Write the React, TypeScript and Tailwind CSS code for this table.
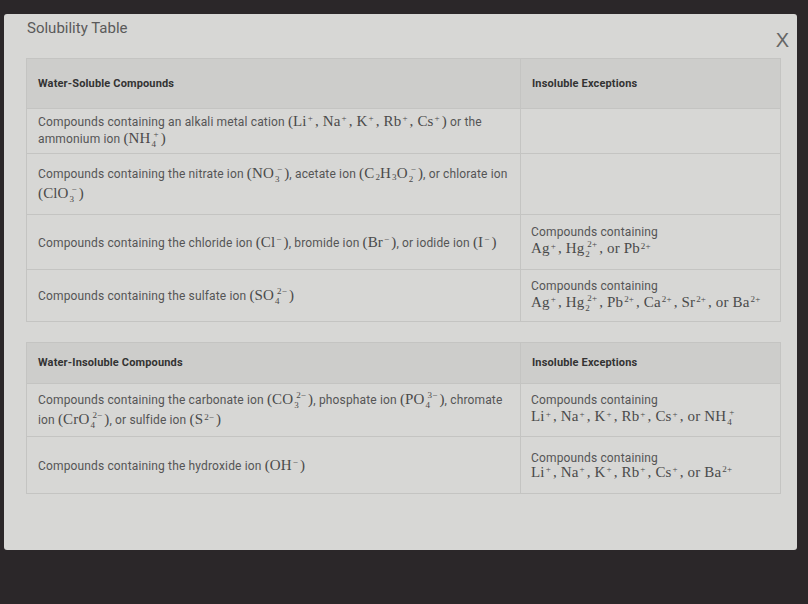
import React from "react";

// chem formula pieces
const F = ({ children }: { children: React.ReactNode }) => (
  <span className="font-['Liberation_Serif',serif] text-[15px] text-[#4a4a4a]">{children}</span>
);
const Sub = ({ children }: { children: React.ReactNode }) => <sub className="text-[9px] ml-[1px]">{children}</sub>;
const Sup = ({ children }: { children: React.ReactNode }) => <sup className="text-[9px] ml-[1px] mr-[2px]">{children}</sup>;
// stacked sub + sup, like typeset math
const SS = ({ b, t }: { b: string; t: string }) => (
  <span className="inline-flex flex-col align-[6px] text-[9px] leading-[10px] ml-[1px] mr-[2px]">
    <span className="pl-[2px]">{t}</span>
    <span>{b}</span>
  </span>
);

type Row = { left: React.ReactNode; right: React.ReactNode; h: string };

const soluble: Row[] = [
  {
    h: "h-[45px]",
    left: (
      <>
        Compounds containing an alkali metal cation <F>(Li<Sup>+</Sup>, Na<Sup>+</Sup>, K<Sup>+</Sup>, Rb<Sup>+</Sup>, Cs<Sup>+</Sup>)</F> or the ammonium ion <F>(NH<SS b="4" t="+" />)</F>
      </>
    ),
    right: null,
  },
  {
    h: "h-[61px]",
    left: (
      <>
        Compounds containing the nitrate ion <F>(NO<SS b="3" t="−" />)</F>, acetate ion <F>(C<Sub>2</Sub>H<Sub>3</Sub>O<SS b="2" t="−" />)</F>, or chlorate ion <F>(ClO<SS b="3" t="−" />)</F>
      </>
    ),
    right: null,
  },
  {
    h: "h-[55px]",
    left: (
      <>
        Compounds containing the chloride ion <F>(Cl<Sup>−</Sup>)</F>, bromide ion <F>(Br<Sup>−</Sup>)</F>, or iodide ion <F>(I<Sup>−</Sup>)</F>
      </>
    ),
    right: (
      <>
        Compounds containing
        <br />
        <F>Ag<Sup>+</Sup>, Hg<SS b="2" t="2+" />, or Pb<Sup>2+</Sup></F>
      </>
    ),
  },
  {
    h: "h-[52px]",
    left: (
      <>
        Compounds containing the sulfate ion <F>(SO<SS b="4" t="2−" />)</F>
      </>
    ),
    right: (
      <>
        Compounds containing
        <br />
        <F>Ag<Sup>+</Sup>, Hg<SS b="2" t="2+" />, Pb<Sup>2+</Sup>, Ca<Sup>2+</Sup>, Sr<Sup>2+</Sup>, or Ba<Sup>2+</Sup></F>
      </>
    ),
  },
];

const insoluble: Row[] = [
  {
    h: "h-[53px]",
    left: (
      <>
        Compounds containing the carbonate ion <F>(CO<SS b="3" t="2−" />)</F>, phosphate ion <F>(PO<SS b="4" t="3−" />)</F>, chromate ion <F>(CrO<SS b="4" t="2−" />)</F>, or sulfide ion <F>(S<Sup>2−</Sup>)</F>
      </>
    ),
    right: (
      <>
        Compounds containing
        <br />
        <F>Li<Sup>+</Sup>, Na<Sup>+</Sup>, K<Sup>+</Sup>, Rb<Sup>+</Sup>, Cs<Sup>+</Sup>, or NH<SS b="4" t="+" /></F>
      </>
    ),
  },
  {
    h: "h-[57px]",
    left: (
      <>
        Compounds containing the hydroxide ion <F>(OH<Sup>−</Sup>)</F>
      </>
    ),
    right: (
      <>
        Compounds containing
        <br />
        <F>Li<Sup>+</Sup>, Na<Sup>+</Sup>, K<Sup>+</Sup>, Rb<Sup>+</Sup>, Cs<Sup>+</Sup>, or Ba<Sup>2+</Sup></F>
      </>
    ),
  },
];

const Table = ({ title, rows, headH }: { title: string; rows: Row[]; headH: string }) => (
  <div className="border border-[#c4c4c2] text-[12px] leading-[14px] text-[#555] tracking-[0.15px]">
    <div className={`grid grid-cols-[493px_1fr] bg-[#cdcdcb] ${headH}`}>
      <div className="flex items-center px-[11px] text-[11px] font-bold text-[#333]">{title}</div>
      <div className="flex items-center px-[11px] text-[11px] font-bold text-[#333] border-l border-[#c4c4c2]">Insoluble Exceptions</div>
    </div>
    {rows.map((r, i) => (
      <div key={i} className={`grid grid-cols-[493px_1fr] border-t border-[#c4c4c2] ${r.h}`}>
        <div className="flex items-center pl-[11px] pr-[10px]">
          <div>{r.left}</div>
        </div>
        <div className="flex items-center px-[10px] border-l border-[#c4c4c2]">
          <div>{r.right}</div>
        </div>
      </div>
    ))}
  </div>
);

export default function App() {
  return (
    <div className="w-[808px] h-[604px] bg-[#2b2729] pt-[14px] pl-[4px] font-['Roboto',sans-serif]">
      <div className="w-[793px] h-[536px] bg-[#d7d7d5] rounded-[3px] pl-[22px] pr-[16px] pt-[4px] relative">
        <div className="pl-[1px] text-[15px] leading-[20px] text-[#5a5a5a]">Solubility Table</div>
        <button className="absolute right-[8px] top-[16px] text-[#666] text-[20px] leading-none font-['Liberation_Sans',sans-serif]">
          X
        </button>
        <div className="mt-[20px]">
          <Table title="Water-Soluble Compounds" rows={soluble} headH="h-[49px]" />
        </div>
        <div className="mt-[20px]">
          <Table title="Water-Insoluble Compounds" rows={insoluble} headH="h-[40px]" />
        </div>
      </div>
    </div>
  );
}
